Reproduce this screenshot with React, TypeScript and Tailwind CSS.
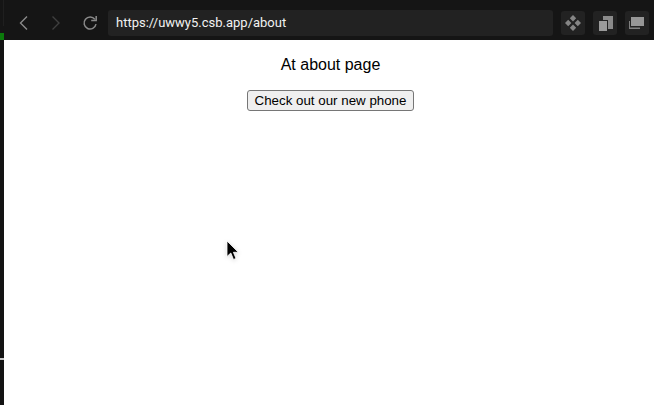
import React from "react";

const F = "font-['Liberation_Sans',Arial,sans-serif]";

function IconBtn({ children }: { children: React.ReactNode }) {
  return <div className="h-6 w-6 rounded-[3px] bg-[#222222]">{children}</div>;
}

export default function App() {
  return (
    <div className="flex h-[405px] w-[654px] flex-col overflow-hidden bg-white">
      <header className="relative flex h-[40px] shrink-0 items-center bg-[#151515] pt-[5px]">
        <div className="absolute bottom-0 left-0 h-[7px] w-[4px] bg-[#0b7a0b]" />
        <div className="absolute left-[3px] top-0 h-[26px] w-px bg-[#1f1f1f]" />
        <div className="ml-[18px] flex items-center gap-[20px]">
          <svg width="12" height="16" viewBox="0 0 12 16" fill="none" stroke="#8a8a8a" strokeWidth="1.4">
            <path d="M9 1.5 L2.5 8 L9 14.5" />
          </svg>
          <svg width="12" height="16" viewBox="0 0 12 16" fill="none" stroke="#3f3f3f" strokeWidth="1.4">
            <path d="M2.5 1.5 L9 8 L2.5 14.5" />
          </svg>
          <svg width="16" height="16" viewBox="0 0 16 16" fill="none" stroke="#8a8a8a" strokeWidth="1.5">
            <path d="M12.9 4.4 A6 6 0 1 0 14 9.2" />
            <path d="M14.2 1 V5.6 H9.2" />
          </svg>
        </div>
        <div className="ml-[10px] flex h-[26px] w-[445px] items-center rounded-[3px] bg-[#222222] pl-2 font-['Roboto',sans-serif] text-[13px] text-[#f2f2f2]">
          https://uwwy5.csb.app/about
        </div>
        <div className="ml-2 flex gap-2">
          <IconBtn>
            <svg width="24" height="24" viewBox="0 0 24 24" fill="#858585">
              <path d="M12 4 L15.2 7.2 L12 10.4 L8.8 7.2 Z" />
              <path d="M12 13.6 L15.2 16.8 L12 20 L8.8 16.8 Z" />
              <path d="M7.2 8.8 L10.4 12 L7.2 15.2 L4 12 Z" />
              <path d="M16.8 8.8 L20 12 L16.8 15.2 L13.6 12 Z" />
            </svg>
          </IconBtn>
          <IconBtn>
            <svg width="24" height="24" viewBox="0 0 24 24">
              <path d="M10 5 H20 V18 H10 Z" fill="#8a8a8a" />
              <path d="M5 9 H15 V21 H5 Z" fill="#222222" />
              <path d="M6 10 H14 V20 H6 Z" fill="#9a9a9a" />
            </svg>
          </IconBtn>
          <IconBtn>
            <svg width="24" height="24" viewBox="0 0 24 24">
              <path d="M4 10 H15 V18 H4 Z" fill="#808080" />
              <path d="M5 9 H20 V16.5 H5 Z" fill="#222222" />
              <path d="M6 6 H19 V15 H6 Z" fill="#969696" />
            </svg>
          </IconBtn>
        </div>
      </header>
      <div className="relative flex min-h-0 flex-1">
        <aside className="relative w-[4px] shrink-0 bg-[#131313]">
          <div className="absolute left-0 top-[318px] h-[2px] w-[4px] bg-[#c8c8c8]" />
        </aside>
        <main className={`flex flex-1 flex-col items-center pl-[3px] text-black ${F}`}>
          <p className="mt-[16px] text-[16px] leading-[18px]">At about page</p>
          <button className="mt-[16px] box-border h-[21px] w-[167px] rounded-[3px] border border-[#767676] bg-[#efefef] p-0 text-center text-[13.33px] leading-[15px] text-black">
            Check out our new phone
          </button>
        </main>
        <svg className="absolute left-[226px] top-[200px] drop-shadow-sm" width="14" height="21" viewBox="0 0 14 21">
          <path d="M1 1 V16.5 L4.8 13 L7.5 19.5 L10 18.4 L7.4 12.3 L12.3 12.3 Z" fill="#000" stroke="#fff" strokeWidth="0.8" />
        </svg>
      </div>
    </div>
  );
}
